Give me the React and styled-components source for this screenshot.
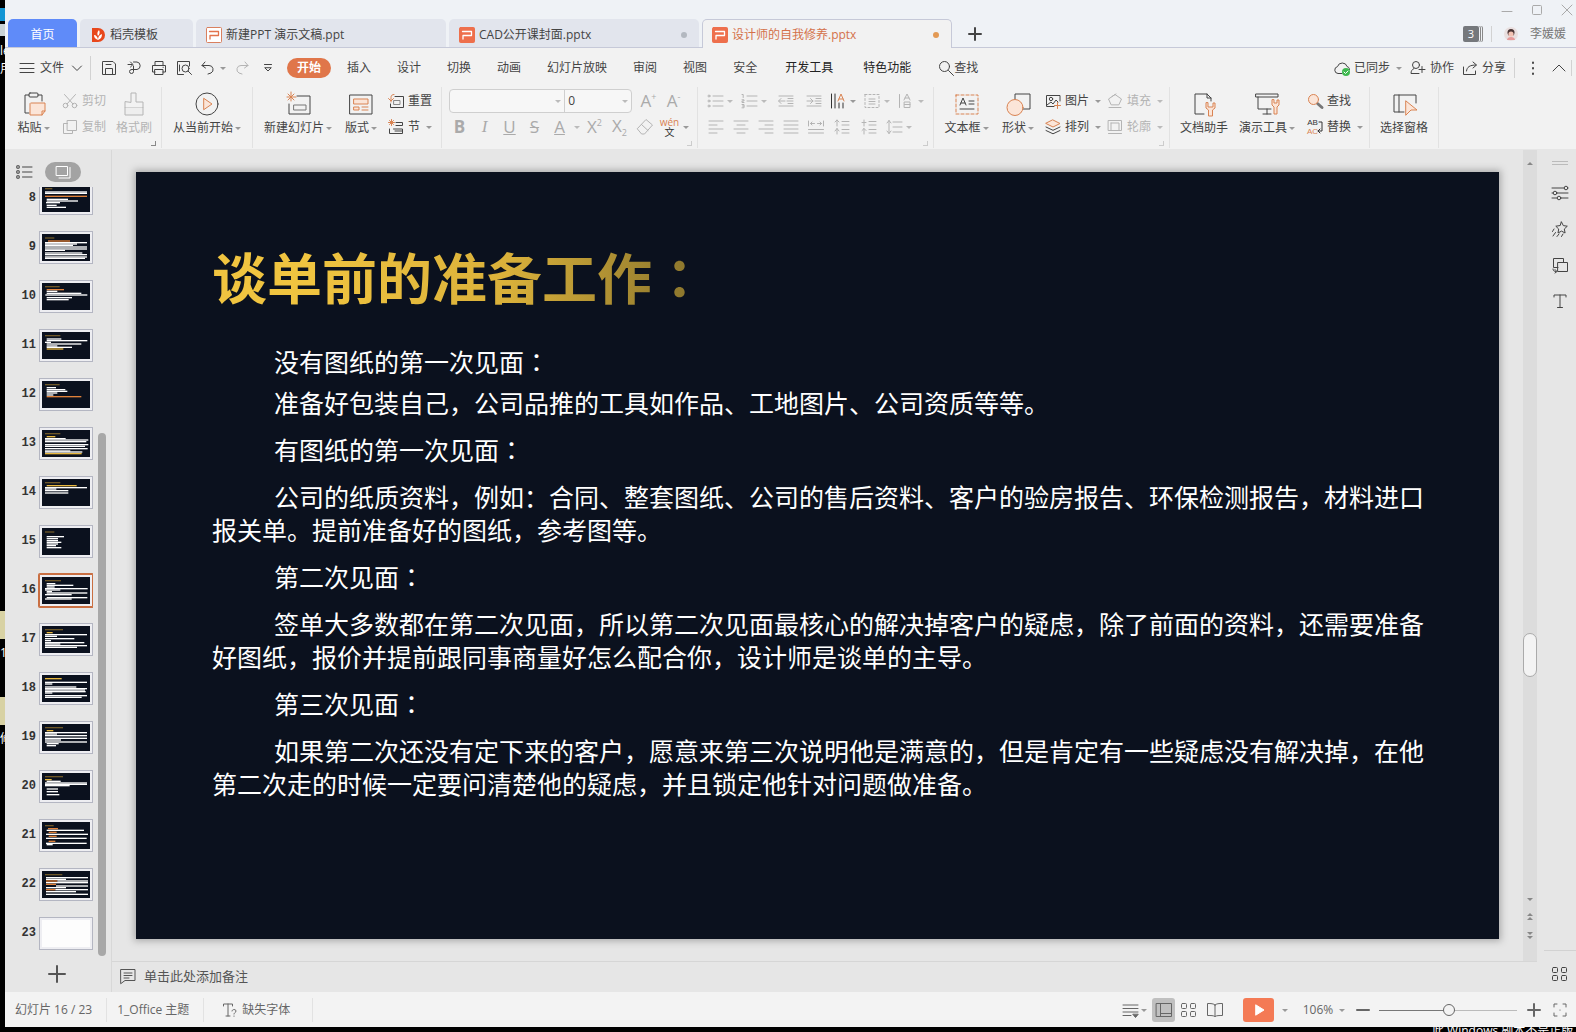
import React from "react";
import styled, { createGlobalStyle, css } from "styled-components";

const GlobalStyle = createGlobalStyle`
  * {
    box-sizing: border-box;
  }
  body {
    margin: 0;
    background: #000;
    overflow: hidden;
    font-family: "Open Sans", "Noto Sans CJK SC", sans-serif;
    font-size: 12px;
    line-height: 18px;
    color: #444;
  }
  button, select, input {
    font: inherit;
    color: inherit;
    margin: 0;
    padding: 0;
    border: none;
    background: none;
  }
  h1, p {
    margin: 0;
    font-weight: normal;
  }
`;

const O = "#d98352";
const P = "#fbe5d8";

/* ---------- icons ---------- */

const Svg = styled.svg`
  display: block;
  flex: none;
  fill: none;
  stroke: currentColor;
  stroke-width: ${(p) => p.$sw || 1};
  stroke-linejoin: round;
  stroke-linecap: round;
  overflow: visible;
`;

const Icon = ({ s = 16, sw, children }) => (
  <Svg width={s} height={s} viewBox={`0 0 ${s} ${s}`} $sw={sw} aria-hidden="true">
    {children}
  </Svg>
);

const icons = {
  menu: <path d="M1 3.500h14M1 8.500h14M1 12.500h14" />,
  chevron: <path d="M3.500 6 8 10.500 12.500 6" />,
  chevronUp: <path d="M2 11 8 5l6 6" />,
  save: <path d="M2 1.500h10l2.500 2.500v10.500h-13v-12zM4.500 14V8.500h7V14M5 4.500h5" />,
  exportPdf: <path d="M2 4.500h4M4.500 2 7 4.500 4.500 7M7.500 2h3.500a3.800 3.800 0 0 1 0 7.500H5.500M5.500 9.500a2 2 0 1 0 2 2V6" />,
  print: <path d="M4 5V1.500h8V5M4 12H1.500V5.500h13V12H12M4 9.500h8v5H4zM12 7.300h.3" />,
  preview: (
    <>
      <path d="M13.500 6V1.500h-12v13h6" />
      <circle cx="9.500" cy="8.500" r="3.500" />
      <path d="m12 11 3.500 3.500M3.500 11V5" />
    </>
  ),
  undo: <path d="M5 2 2 5.500 5.500 8M2 5.500h7a4 4 0 0 1 2 7.500l-3 1" />,
  redo: <path d="m11 2 3 3.500L10.500 8M14 5.500H7a4 4 0 0 0-2 7.500l3 1" />,
  more: <path d="M4.500 4.500h7M5 8l3 3 3-3z" />,
  search: (
    <>
      <circle cx="6.500" cy="6.500" r="5" />
      <path d="m10.500 10.500 5 5" />
    </>
  ),
  cloud: (
    <>
      <path d="M8 13.500H4a3.500 3.500 0 0 1-.5-6.900 5 5 0 0 1 9.600 0c1.500.3 2.400 1.500 2.400 3" />
      <circle cx="12" cy="12" r="4" fill="#3fb950" stroke="none" />
      <path d="m10 12 1.500 1.500 2.500-2.500" stroke="#fff" />
    </>
  ),
  collab: (
    <>
      <circle cx="6" cy="5" r="3.500" />
      <path d="M4 8.500c-2 1-3 2.500-3 5h8M9 9.500h6M12 6.500v6" />
    </>
  ),
  share: <path d="M1.500 7v7.500h12V11M4.500 11c.5-4 3-6 9.500-6M11 2l3.500 3L11 8" />,
  dots: <path d="M8 2.500v.5M8 8v.5M8 13.500v.5" strokeWidth="2" />,
  cut: (
    <>
      <circle cx="3.500" cy="12.500" r="2.300" />
      <circle cx="12.500" cy="12.500" r="2.300" />
      <path d="M2.500 1.500 11 11M13.500 1.500 5 11" />
    </>
  ),
  copy: <path d="M5.500 1.500h9v10h-9zM5.500 4.500h-4v10h9v-3" />,
  reset: (
    <>
      <path d="M7 3.500h8.500v11h-13V11" />
      <path d="M6 7.500h6v4H6z" stroke="#888" />
      <path d="M3 9V4.500C3 2.500 4 1.500 6 1.500M.5 5.500 3 8l2.500-2.500" stroke={O} />
    </>
  ),
  section: (
    <>
      <path d="M8 3.500h6.500v3H8M1.500 10v4.500h13v-4.500h-9M7 12h7" />
      <path d="M3.500.5v6M.5 3.500h6M1.500 1.500l4 4M5.500 1.500l-4 4" stroke={O} />
    </>
  ),
  picture: (
    <>
      <path d="M15 8V2.500H1.500v11H9" />
      <circle cx="6" cy="6" r="1.700" />
      <path d="m2 12 4-3 2 2 3-4 2 2" />
      <path d="M12.500 9.500v6M9.500 12.500h6" stroke={O} />
    </>
  ),
  arrange: (
    <>
      <path d="m1 8 7 3.300L15 8M1 11.500l7 3.300 7-3.300" />
      <path d="M8 1 15 4.500 8 8 1 4.500z" fill={P} stroke={O} />
    </>
  ),
  fill: <path d="M4 11.500 1.500 6 8 1.500 14.500 6 12 11.500zM5 3.500 9 1M2 14.500h12" />,
  outline: <path d="M1.500 1.500h13v10h-13zM4 4h8v7M4 11V4M1.500 14.500h13" />,
  find: (
    <>
      <path d="m10.500 10.500 4.500 4" strokeWidth="3" stroke="#777" />
      <circle cx="6.500" cy="6.500" r="5" fill={P} stroke={O} />
    </>
  ),
  bullets: (
    <>
      <path d="M6 3h10M6 8h10M6 13h10" />
      <circle cx="2" cy="3" r="1" />
      <circle cx="2" cy="8" r="1" />
      <circle cx="2" cy="13" r="1" />
    </>
  ),
  numbers: <path d="M6 3h10M6 8h10M6 13h10M1 1.500h1.200V4.500M1 6.800h2v1.200H1v1.500h2M1 11.500h2v3.300H1M1.500 13H3" />,
  outdent: <path d="M1 3h14M1 13h14M7 8H1M3 5.500.5 8 3 10.500M10 5.500h5M9 8h6M10 10.500h5" />,
  indent: <path d="M1 3h14M1 13h14M1 8h6M4.500 5.500 7 8l-2.500 2.500M10 5.500h5M9 8h6M10 10.500h5" />,
  textDir: (
    <>
      <path d="M1.500 1v14M5 1v14M9 10v5M13 10v5" stroke="#333" />
      <path d="m8 8 3-7 3 7M9 6h4" stroke={O} />
    </>
  ),
  valign: (
    <>
      <path d="M1 1.500h14v13H1z" strokeDasharray="2 2" />
      <path d="M5 6h6M5 8.500h6M5 11h6" />
    </>
  ),
  textBox: <path d="M1.500 1.500v13M6 7l3-6 3 6M7 5h4M6.500 9h5.500v5.500H6.500zM6.500 11.500H12" />,
  left: <path d="M1 2h14M1 6h8M1 10h14M1 14h8" />,
  center: <path d="M1 2h14M4 6h8M1 10h14M4 14h8" />,
  right: <path d="M1 2h14M7 6h8M1 10h14M7 14h8" />,
  justify: <path d="M1 2h14M1 6h14M1 10h14M1 14h14" />,
  distribute: <path d="M.5 2v5M15.500 2v5M2.500 4.500h4M9.500 4.500h4M4 3 2.500 4.500 4 6M12 3l1.500 1.500L12 6M.5 10.500h15M.5 14h15" />,
  spaceUp: <path d="M8 2.500h7M8 6h7M8 10.500h7M8 14h7M3 1v6M1 3l2-2 2 2M3 15V9.500M1 12l2-2.500L5 12" />,
  spaceDown: <path d="M8 2.500h7M8 6h7M8 10.500h7M8 14h7M3 1v6M1 3.500h4M3 15V9.500M1 11.500l2-2 2 2" />,
  lineHeight: <path d="M7 3h9M7 8h9M7 13h9M3 1.500v13M1 4l2-2.500L5 4M1 12l2 2.500L5 12" />,
  eraser: <path d="M.5 9.500 9 .5l6.500 5.500-8 9H5zM4.500 5.500l6.500 6" />,
  notes: <path d="M1 1.500h14v11H5l-4 3zM4 5h8M4 7.500h8M4 10h5" />,
  outlineView: <path d="M6.500 3H16M6.500 8H16M6.500 13H16M1.200 1.800h2v2.400h-2zM1.200 6.800h2v2.400h-2zM1.200 11.800h2v2.400h-2z" />,
  slideView: <path d="M1.500 2.500h11v9h-11zM15 3.500v10.500H4" />,
  missing: (
    <>
      <path d="M1.500 4V2h9v2M6 2v12M4 14h4" />
      <path d="M10 9c0-2 4-2 4 0 0 1.500-2 1.500-2 3M12 14v.3" />
    </>
  ),
  noteToggle: (
    <>
      <path d="M0 3h15M0 6.500h15M0 10h15M0 13.500h8" />
      <path d="m10 12.500 2.500 3 2.500-3z" fill="currentColor" />
    </>
  ),
  normalView: <path d="M.5 1.500h15v13H.5zM4.500 2v12M4.500 11.500H15" />,
  grid: (
    <>
      <rect x="0.5" y="1.500" width="5" height="5" rx="1" />
      <rect x="9.500" y="1.500" width="5" height="5" rx="1" />
      <rect x="0.5" y="9.500" width="5" height="5" rx="1" />
      <rect x="9.500" y="9.500" width="5" height="5" rx="1" />
    </>
  ),
  book: <path d="M8 3v11.500M8 3C6.500 1.500 4 1.500.5 1.500v12C4 13.500 6.500 13.500 8 14.500c1.500-1 4-1 7.500-1v-12C12 1.500 9.500 1.500 8 3z" />,
  minus: <path d="M2 8h12" strokeWidth="2" />,
  plus: <path d="M2 8h12M8 2v12" strokeWidth="2" />,
  thinPlus: <path d="M0 8h16M8 0v16" strokeWidth="2" />,
  fit: <path d="M2 5V2h3M11 2h3v3M14 11v3h-3M5 14H2v-3M8 8v.2" />,
  sliders: (
    <>
      <path d="M0 3h12M5 8h11M0 8h1M0 13h5M9 13h7" />
      <circle cx="14" cy="3" r="1.800" />
      <circle cx="3" cy="8" r="1.800" />
      <circle cx="7" cy="13" r="1.800" />
    </>
  ),
  star: <path d="m9.500 1 1.800 3.600 4 .6-3 2.800.8 4-3.600-1.900-3.500 1.900.7-4-2.900-2.800 4-.6zM2 8l-1.500 2.500M3.500 11.500 1 15M7 13l-2 2.500M11 13l-1.500 2.500" />,
  swap: <path d="M6 10.500H1.500v-9h10v4M6 5.500h9.500v9H6zM1 12c0 1.500 1 2.500 3 2.500M3 12.500l2 2-2 1.500" />,
  type: <path d="M2 4V2h12v2M8 2v12.500M5.500 14.500h5" />,
  winMin: <path d="M3 9.500h10" />,
  winMax: <rect x="3.500" y="3.500" width="9" height="9" rx="1" />,
  winClose: <path d="m3 3 10 10M13 3 3 13" />,
};

const bigIcons = {
  paste: (
    <>
      <path d="M7 3H3v18h4M16 3h4v6" />
      <rect x="7" y="1" width="9" height="4" rx="1" />
      <path d="M9 11h14v8l-3 4H8V12z" fill={P} stroke={O} />
      <path d="M23 19h-3v4" stroke={O} />
    </>
  ),
  brush: (
    <>
      <path d="M9 10V1h5v9h7v6H3v-6z" />
      <path d="M3 16v7h18v-7" fill="#eee" />
    </>
  ),
  play: (
    <>
      <circle cx="12" cy="12" r="11" />
      <path d="m9 6.500 8 5.500-8 5.500z" fill={P} stroke={O} />
    </>
  ),
  newSlide: (
    <>
      <path d="M11 4h13v18H3V12" />
      <path d="M8 13h12v5H8z" stroke="#777" />
      <path d="M5 0v9M1 5h9M2 2l6 6M8 2 2 8" stroke={O} />
    </>
  ),
  layout: (
    <>
      <path d="M1 3h22v19H1z" />
      <path d="M5 7h14v5H5zM5 15h5v3H5zM13 15h6M13 18h6" fill={P} stroke={O} />
    </>
  ),
  textFrame: (
    <>
      <path d="M1 3h22v19H1z" stroke={O} strokeDasharray="3 2" />
      <path d="m5 13 3-7 3 7M6 11h4M14 9h5M14 12h5M5 17h14" />
    </>
  ),
  shapes: (
    <>
      <path d="M9 10V2h15v15h-7" />
      <circle cx="9" cy="15.500" r="8" fill={P} stroke={O} />
    </>
  ),
  docHelp: (
    <>
      <path d="M12 22H3V2h12l4 4v3M15 2v4h4" />
      <path d="M14 11v5l2.500 2v6h4v-6l2.500-2v-5h-2v4h-5v-4z" fill={P} stroke={O} />
    </>
  ),
  present: (
    <>
      <path d="M1 2h22v3H1zM3 5v12h13M12 17v5M8 22h8" />
      <path d="M17 8v5l2 2v7h3v-7l2-2V8h-2v3h-3V8z" fill={P} stroke={O} />
    </>
  ),
  pane: (
    <>
      <path d="M12 20H2V3h22v8M7 3v17" />
      <path d="m14 9 11 9h-6l-5 5z" fill={P} stroke={O} />
    </>
  ),
};

/* ---------- shared bits ---------- */

const Caret = styled.span`
  flex: none;
  width: 6px;
  height: 3px;
  margin-left: 2px;
  border: 3px solid transparent;
  border-top-color: ${(p) => (p.$dim ? "#bbb" : "#999")};
  border-bottom: none;
`;

const PlainButton = styled.button`
  display: flex;
  flex: none;
  align-items: center;
  justify-content: center;
  white-space: nowrap;
  gap: ${(p) => p.$gap || 0}px;
  width: ${(p) => (p.$w ? p.$w + "px" : "auto")};
  height: ${(p) => p.$h || 20}px;
  color: ${(p) => (p.$dim ? "#b4b4b4" : p.$color || "inherit")};
`;

/* ---------- frame ---------- */

const Desktop = styled.div`
  position: relative;
  height: 100vh;
  padding: 0 0 5px 5px;
  overflow: hidden;
  color: #fff;
`;

const DesktopItem = styled.div`
  position: absolute;
  left: ${(p) => p.$left || 0};
  top: ${(p) => p.$top};
  white-space: nowrap;
  width: ${(p) => (p.$chip ? "5px" : "auto")};
  height: ${(p) => p.$chip || 18}px;
  background: ${(p) => p.$bg || "none"};
`;

const Window = styled.div`
  position: relative;
  display: flex;
  flex-direction: column;
  height: 100%;
  overflow: hidden;
  background: #f2f2f2;
  color: #444;
`;

const TitleBar = styled.header`
  display: flex;
  flex: none;
  align-items: flex-end;
  height: 48px;
  padding-left: 3px;
  background: #eff2f6;
  border-bottom: 1px solid #c6c9d8;
`;

const Tab = styled.button`
  display: flex;
  align-items: center;
  gap: 4px;
  flex: 0 1 ${(p) => p.$w}px;
  height: 28px;
  margin-right: 3px;
  padding: 3px 12px 0 10px;
  border-radius: 5px 5px 0 0;
  background: #e2e5ed;
  text-align: left;
  white-space: nowrap;
  ${(p) =>
    p.$home &&
    css`
      justify-content: center;
      padding: 3px 0 0;
      background: #5f8bf9;
      color: #fff;
    `}
  ${(p) =>
    p.$active &&
    css`
      height: 29px;
      margin-bottom: -1px;
      padding: 1px 12px 0 9px;
      background: #f2f2f2;
      border: 1px solid #c6c9d8;
      border-bottom: none;
      color: #d4714a;
    `}
`;

const Dot = styled.span`
  width: 6px;
  height: 6px;
  margin-left: auto;
  border-radius: 50%;
  background: ${(p) => p.$color};
`;

const TitleRight = styled.div`
  display: flex;
  flex-direction: column;
  align-items: flex-end;
  gap: 4px;
  height: 47px;
  margin-left: auto;
`;

const Controls = styled.div`
  display: flex;
  margin-right: -6px;
  color: #aaa;
`;

const User = styled.div`
  display: flex;
  align-items: center;
  padding-right: 10px;
  color: #777;
`;

const Count = styled.span`
  padding: 0 5px;
  height: 16px;
  border-radius: 2px;
  background: #75787c;
  color: #fff;
  font-size: 11px;
  line-height: 16px;
  box-shadow: 1px 0 #eff2f6, 2px 0 #888, 3px 0 #eff2f6, 4px 0 #888;
`;

const Rule = styled.span`
  flex: none;
  width: 1px;
  height: ${(p) => p.$h || 16}px;
  margin: 0 ${(p) => p.$m || 0}px;
  background: #d2d2d2;
`;

const MenuBar = styled.nav`
  display: flex;
  flex: none;
  align-items: center;
  height: 39px;
  padding: 1px 0 0 14px;
`;

const MenuTab = styled.button`
  flex: none;
  height: 20px;
  padding: 0 ${(p) => (p.$wide ? 15 : 13)}px;
  white-space: nowrap;
  color: ${(p) => (p.$wide ? "#222" : "inherit")};
`;

const ActiveMenuTab = styled.button`
  flex: none;
  width: 44px;
  height: 20px;
  margin: 0 3px 0 7px;
  border-radius: 10px;
  background: #e0764a;
  color: #fff;
  font-weight: bold;
`;

const MenuSearch = styled(PlainButton)`
  margin-left: 12px;
`;

const MenuRight = styled.div`
  display: flex;
  align-items: center;
  gap: 8px;
  margin-left: auto;
`;

const MenuEnd = styled.div`
  display: flex;
  align-items: center;
`;

const Ribbon = styled.div`
  display: flex;
  flex: none;
  height: 63px;
  border-bottom: 1px solid #e6e6e6;
`;

const Group = styled.div`
  position: relative;
  display: flex;
  flex: none;
  width: ${(p) => p.$w}px;
  height: 61px;
  border-right: 1px solid #e2e2e2;
`;

const Corner = styled.span`
  position: absolute;
  right: 5px;
  bottom: 2px;
  width: 5px;
  height: 5px;
  border-right: 1px solid ${(p) => (p.$dark ? "#888" : "#ccc")};
  border-bottom: 1px solid ${(p) => (p.$dark ? "#888" : "#ccc")};
`;

const BigButton = styled.button`
  display: flex;
  flex: none;
  flex-direction: column;
  align-items: center;
  gap: 3px;
  width: ${(p) => p.$w}px;
  padding-top: 5px;
  height: 56px;
  white-space: nowrap;
  color: ${(p) => (p.$dim ? "#b4b4b4" : "#444")};
`;

const BigLabel = styled.span`
  display: flex;
  align-items: center;
`;

const Stack = styled.div`
  display: flex;
  flex: none;
  flex-direction: column;
  align-items: flex-start;
  gap: 6px;
  padding: 4px 0 0 ${(p) => p.$left || 0}px;
  width: ${(p) => (p.$w ? p.$w + "px" : "auto")};
`;

const Row = styled.div`
  display: flex;
  align-items: center;
  height: 20px;
`;

const Glyph = styled.span`
  width: 20px;
  font-size: 17px;
  line-height: 20px;
  color: #aaa;
  font-style: ${(p) => (p.$italic ? "italic" : "normal")};
  font-weight: ${(p) => (p.$bold ? "bold" : "normal")};
  font-family: ${(p) => (p.$italic ? '"Liberation Serif", serif' : "inherit")};
  text-decoration: ${(p) => p.$line || "none"};
  text-decoration-thickness: 1px;
  sup, sub {
    font-size: 9px;
    line-height: 1;
  }
`;

const Pinyin = styled.span`
  display: flex;
  flex-direction: column;
  align-items: center;
  font-size: 10px;
  line-height: 10px;
  color: #333;
  span {
    color: #d98352;
  }
`;

const Replace = styled.span`
  display: flex;
  align-items: center;
  width: 16px;
  color: #333;
`;

const ReplaceText = styled.span`
  display: flex;
  flex-direction: column;
  width: 11px;
  font: 8px/9px "Liberation Sans", sans-serif;
  span {
    color: #d98352;
  }
`;

const Combo = styled.div`
  display: flex;
  width: 183px;
  height: 24px;
  margin: 0 4px 0 2px;
  border: 1px solid #cfcfcf;
  border-radius: 4px;
  background: #f7f7f7;
`;

const ComboPart = styled.label`
  display: flex;
  align-items: center;
  width: ${(p) => p.$w}px;
  padding: 0 3px;
  & + & {
    border-left: 1px solid #cfcfcf;
  }
  select {
    flex: 1;
    min-width: 0;
    appearance: none;
    outline: none;
  }
`;

/* ---------- workspace ---------- */

const Workspace = styled.div`
  display: flex;
  flex: 1;
  min-height: 0;
  background: #e6e6e6;
`;

const Sidebar = styled.aside`
  display: flex;
  flex: none;
  flex-direction: column;
  width: 107px;
  border-right: 1px solid #d8d8d8;
`;

const SideHead = styled.div`
  display: flex;
  flex: none;
  align-items: center;
  gap: 13px;
  height: 37px;
  padding: 6px 0 0 11px;
`;

const Pill = styled.button`
  display: flex;
  align-items: center;
  justify-content: center;
  width: 36px;
  height: 20px;
  border-radius: 10px;
  background: #a3a3a3;
  color: #fff;
`;

const SideBody = styled.div`
  display: flex;
  flex: 1;
  min-height: 0;
  justify-content: space-between;
  padding-right: 5px;
`;

const ThumbList = styled.div`
  display: flex;
  flex-direction: column;
  justify-content: flex-end;
  gap: 16px;
  padding-bottom: 7px;
  overflow: hidden;
`;

const ThumbRow = styled.button`
  display: flex;
  flex: none;
  align-items: center;
  gap: 3px;
  height: 33px;
`;

const Num = styled.span`
  width: 31px;
  padding-bottom: 2px;
  text-align: right;
  color: #333;
  font: bold 12px/18px "Liberation Mono", monospace;
`;

const ThumbFrame = styled.span`
  display: block;
  padding: 2px;
  border: 1px solid #b4b6c2;
  background: #eeeef2;
  ${(p) =>
    p.$active &&
    css`
      border-color: #c96f42;
      border-radius: 1px;
      box-shadow: 0 0 0 1px #c96f42;
    `}
`;

const Mini = styled.svg`
  display: block;
  width: 48px;
  height: 27px;
  background: ${(p) => (p.$blank ? "#fdfdfd" : "#0b111e")};
`;

const SideScroll = styled.div`
  display: flex;
  align-items: flex-end;
  width: 8px;
  padding-bottom: 1px;
`;

const SideScrollThumb = styled.div`
  width: 8px;
  height: 68%;
  border-radius: 4px;
  background: #a8a8a8;
`;

const AddSlide = styled.button`
  display: flex;
  flex: none;
  justify-content: center;
  align-items: center;
  height: 35px;
  padding: 0 3px 2px 0;
  color: #555;
`;

const Center = styled.main`
  display: flex;
  flex: 1;
  flex-direction: column;
  min-width: 0;
`;

const CanvasRow = styled.div`
  display: flex;
  flex: 1;
  min-height: 0;
`;

const Canvas = styled.div`
  display: flex;
  flex: 1;
  padding: 22px 24px;
`;

const Slide = styled.article`
  flex: 1;
  padding: 73px 68px 0 76px;
  background: #0b111e;
  box-shadow: 0 0 7px 2px #aaa;
  color: #fff;
  font-family: "Noto Sans CJK SC", sans-serif;
`;

const SlideTitle = styled.h1`
  width: 495px;
  margin-bottom: 40px;
  font-size: 55px;
  font-weight: 700;
  line-height: 60px;
  white-space: nowrap;
  color: transparent;
  background: linear-gradient(90deg, #f0c440 20%, #d9b03a 60%, #85712c);
  background-clip: text;
`;

const Para = styled.p`
  margin-bottom: ${(p) => (p.$tight ? 8 : 14)}px;
  font-size: 25px;
  line-height: 33px;
  text-indent: 62px;
`;

// a closing colon sits in the middle of its cell
const Colon = styled.span`
  font-family: "Noto Sans CJK JP", sans-serif;
`;

const VScroll = styled.div`
  display: flex;
  flex-direction: column;
  align-items: center;
  width: 14px;
  padding: 12px 0 22px;
  background: #dcdcdc;
`;

const Space = styled.div`
  flex: ${(p) => p.$n};
`;

const VThumb = styled.div`
  width: 14px;
  height: 44px;
  border: 1px solid #aaa;
  border-radius: 7px;
  background: #f3f3f3;
`;

const Arrow = styled.span`
  width: 6px;
  height: 3px;
  margin-bottom: ${(p) => p.$mb || 0}px;
  border: 3px solid transparent;
  ${(p) =>
    p.$up
      ? "border-bottom-color: #888; border-top: none;"
      : "border-top-color: #888; border-bottom: none;"}
`;

const Notes = styled.button`
  display: flex;
  flex: none;
  align-items: center;
  gap: 8px;
  height: 31px;
  padding: 0 0 2px 8px;
  border-top: 1px solid #d6d6d6;
  font-size: 13px;
  color: #555;
`;

const Tools = styled.aside`
  display: flex;
  flex: none;
  flex-direction: column;
  align-items: center;
  gap: 20px;
  width: 39px;
  padding: 11px 0 0 7px;
  color: #444;
`;

const Grip = styled.span`
  width: 16px;
  height: 4px;
  border: solid #bbb;
  border-width: 1px 0;
`;

const ToolsEnd = styled.div`
  display: flex;
  justify-content: center;
  width: 100%;
  height: 42px;
  margin-top: auto;
  padding-top: 15px;
  border-top: 1px solid #d2d2d2;
`;

const StatusBar = styled.footer`
  display: flex;
  flex: none;
  align-items: center;
  height: 35px;
  padding-top: 1px;
  background: #f3f3f3;
  color: #666;
`;

const StatusCell = styled.div`
  display: flex;
  align-items: center;
  gap: 4px;
  height: 24px;
  padding: 0 ${(p) => p.$p + 4}px 0 ${(p) => p.$p}px;
  border-right: 1px solid #e2e2e2;
  white-space: nowrap;
`;

const StatusRight = styled.div`
  display: flex;
  align-items: center;
  margin-left: auto;
`;

const ViewButton = styled(PlainButton)`
  border-radius: 3px;
  background: ${(p) => (p.$on ? "#c0c0c0" : "none")};
`;

const PlayButton = styled(PlainButton)`
  margin-left: 16px;
  border-radius: 3px;
  background: #f47a55;
  color: #fff;
`;

const Zoom = styled.input`
  appearance: none;
  width: 138px;
  height: 12px;
  margin: 0 7px;
  background: linear-gradient(90deg, #777 50%, #bbb 50%) center / 100% 1px no-repeat;
  &::-webkit-slider-thumb {
    appearance: none;
    width: 12px;
    height: 12px;
    border: 1px solid #666;
    border-radius: 50%;
    background: #f3f3f3;
  }
`;

/* ---------- data ---------- */

const colors = { w: "#fff", o: "#e0813a", y: "#e8b840", g: "#6e5728" };

// every line is [colour, x, y, length] on a 144 x 81 slide
const thumbs = [
  { n: 8, lines: [["g", 9, 9, 22], ["w", 9, 19, 126], ["w", 9, 23, 126], ["o", 9, 32, 126], ["w", 14, 41, 64], ["w", 14, 46, 94], ["w", 12, 51, 42], ["w", 14, 59, 30], ["w", 14, 65, 58]] },
  { n: 9, lines: [["g", 9, 10, 28], ["o", 18, 19, 66], ["w", 9, 24, 126], ["w", 9, 28, 96], ["w", 9, 32, 84], ["w", 9, 37, 126], ["w", 9, 43, 126], ["w", 9, 47, 60], ["w", 9, 55, 112], ["w", 9, 60, 126], ["w", 9, 67, 126], ["w", 9, 71, 120]] },
  { n: 10, lines: [["g", 9, 9, 44], ["o", 14, 18, 52], ["w", 14, 23, 32], ["w", 14, 29, 104], ["w", 10, 34, 126], ["w", 14, 42, 76], ["w", 14, 48, 66]] },
  { n: 11, lines: [["g", 9, 9, 46], ["w", 14, 19, 44], ["w", 14, 24, 122], ["w", 9, 29, 18], ["w", 14, 34, 104], ["w", 14, 40, 32], ["w", 14, 44, 76], ["y", 14, 49, 50]] },
  { n: 12, lines: [["g", 9, 9, 44], ["w", 14, 18, 28], ["w", 14, 24, 56], ["w", 14, 29, 62], ["w", 14, 34, 32], ["w", 14, 40, 20], ["o", 14, 45, 104]] },
  { n: 13, lines: [["g", 9, 9, 46], ["y", 14, 18, 26], ["w", 9, 24, 62], ["w", 9, 28, 130], ["w", 9, 33, 124], ["w", 9, 42, 130], ["w", 9, 47, 120], ["w", 9, 54, 128], ["w", 9, 61, 76], ["w", 9, 64, 112], ["y", 9, 69, 110]] },
  { n: 14, lines: [["g", 9, 9, 46], ["y", 14, 18, 90], ["w", 9, 24, 126], ["w", 9, 28, 34], ["w", 9, 33, 70], ["w", 9, 40, 70]] },
  { n: 15, lines: [["g", 9, 10, 28], ["w", 14, 24, 52], ["w", 14, 30, 34], ["w", 14, 36, 34], ["w", 14, 41, 44], ["w", 14, 46, 34], ["w", 14, 51, 28], ["w", 14, 57, 44]] },
  { n: 16, active: true, lines: [["g", 9, 9, 48], ["w", 14, 18, 26], ["w", 14, 23, 80], ["w", 14, 28, 24], ["w", 9, 33, 128], ["w", 9, 37, 46], ["w", 14, 42, 16], ["w", 14, 46, 122], ["w", 9, 51, 80], ["w", 14, 60, 122], ["w", 9, 64, 80]] },
  { n: 17, lines: [["g", 9, 9, 54], ["y", 14, 18, 18], ["w", 9, 24, 126], ["w", 9, 29, 36], ["w", 9, 36, 88], ["w", 9, 42, 18], ["w", 9, 48, 118], ["w", 9, 52, 46], ["w", 9, 57, 126], ["w", 9, 62, 96]] },
  { n: 18, lines: [["y", 9, 9, 50], ["w", 9, 20, 126], ["w", 9, 25, 22], ["w", 9, 34, 94], ["w", 9, 39, 126], ["w", 9, 43, 120], ["w", 9, 48, 122], ["w", 9, 52, 22], ["w", 9, 60, 126], ["w", 9, 65, 110]] },
  { n: 19, lines: [["g", 9, 9, 54], ["y", 14, 18, 20], ["w", 9, 24, 126], ["w", 9, 28, 36], ["w", 9, 33, 126], ["w", 9, 41, 126], ["w", 9, 46, 48], ["w", 9, 52, 126], ["w", 14, 57, 36], ["w", 14, 63, 28]] },
  { n: 20, lines: [["g", 9, 9, 54], ["y", 9, 18, 20], ["w", 14, 23, 42], ["w", 9, 28, 126], ["w", 9, 32, 126], ["w", 9, 36, 74], ["w", 14, 46, 34], ["w", 14, 54, 34], ["w", 14, 63, 38]] },
  { n: 21, lines: [["g", 9, 9, 26], ["o", 18, 18, 30], ["w", 14, 23, 112], ["o", 20, 29, 24], ["w", 12, 35, 126], ["o", 20, 41, 24], ["w", 12, 47, 122], ["o", 20, 56, 20], ["w", 12, 62, 122], ["w", 14, 66, 18]] },
  { n: 22, lines: [["g", 9, 9, 52], ["w", 12, 18, 126], ["w", 12, 23, 60], ["o", 12, 28, 34], ["w", 46, 28, 92], ["w", 12, 33, 126], ["o", 12, 38, 30], ["w", 42, 43, 96], ["w", 12, 48, 60], ["o", 12, 54, 28], ["w", 40, 54, 98], ["w", 12, 60, 90], ["w", 12, 68, 126]] },
  { n: 23, blank: true, lines: [] },
];

const paragraphs = [
  { tight: true, text: "没有图纸的第一次见面：" },
  { text: "准备好包装自己，公司品推的工具如作品、工地图片、公司资质等等。" },
  { text: "有图纸的第一次见面：" },
  { text: "公司的纸质资料，例如：合同、整套图纸、公司的售后资料、客户的验房报告、环保检测报告，材料进口报关单。提前准备好的图纸，参考图等。" },
  { text: "第二次见面：" },
  { text: "签单大多数都在第二次见面，所以第二次见面最核心的解决掉客户的疑虑，除了前面的资料，还需要准备好图纸，报价并提前跟同事商量好怎么配合你，设计师是谈单的主导。" },
  { text: "第三次见面：" },
  { text: "如果第二次还没有定下来的客户，愿意来第三次说明他是满意的，但是肯定有一些疑虑没有解决掉，在他第二次走的时候一定要问清楚他的疑虑，并且锁定他针对问题做准备。" },
];

/* ---------- parts ---------- */

const withColon = (text) =>
  text.endsWith("：") ? (
    <>
      {text.slice(0, -1)}
      <Colon>：</Colon>
    </>
  ) : (
    text
  );

const PptLogo = ({ hollow }) => (
  <Svg width="16" height="16" viewBox="0 0 16 16" aria-hidden="true">
    <rect x="0.5" y="0.5" width="15" height="15" rx="1" fill={hollow ? "#fff" : "#ee6f4c"} stroke={hollow ? "#d9805f" : "#ee6f4c"} />
    <path d="M3.500 4.500h9v4H4v3.500" stroke={hollow ? "#e2734c" : "#fff"} strokeWidth="1.300" />
  </Svg>
);

const Big = ({ icon, label, w, caret, dim }) => (
  <BigButton $w={w} $dim={dim}>
    <Icon s={24}>{bigIcons[icon]}</Icon>
    <BigLabel>
      {label}
      {caret && <Caret />}
    </BigLabel>
  </BigButton>
);

const Small = ({ icon, label, caret, dim, children }) => (
  <PlainButton $gap={4} $dim={dim}>
    {children || <Icon>{icons[icon]}</Icon>}
    {label}
    {caret && <Caret $dim={dim} />}
  </PlainButton>
);

const Tool = ({ icon, w = 25, caret, dim = true, title, children }) => (
  <PlainButton $w={w} $gap={2} $dim={dim} aria-label={title || icon}>
    {children || <Icon>{icons[icon]}</Icon>}
    {caret && <Caret $dim={dim} />}
  </PlainButton>
);

const Header = () => (
  <TitleBar>
    <Tab $home $w={69}>首页</Tab>
    <Tab $w={113}>
      <Svg width="16" height="16" viewBox="0 0 16 16" aria-hidden="true">
        <path d="M2 1h6a7 7 0 0 1 0 14H2z" fill="#e8481c" stroke="none" />
        <path d="M8 13c-3-1-4-3-4-5 2 0 4 2 4 5zM8 13c0-3 1-5 4-6 0 3-1 5-4 6zM8 9c-1-2-1-4 1-6 1 2 1 4-1 6z" fill="#fff" stroke="none" />
      </Svg>
      稻壳模板
    </Tab>
    <Tab $w={250}>
      <PptLogo hollow />
      新建PPT 演示文稿.ppt
    </Tab>
    <Tab $w={250}>
      <PptLogo />
      CAD公开课封面.pptx
      <Dot $color="#b3b8c0" />
    </Tab>
    <Tab $w={250} $active>
      <PptLogo />
      设计师的自我修养.pptx
      <Dot $color="#e39a55" />
    </Tab>
    <PlainButton $w={40} $h={26} aria-label="新建">
      <Icon s={16}>{icons.plus}</Icon>
    </PlainButton>
    <TitleRight>
      <Controls>
        <PlainButton $w={30} aria-label="最小化"><Icon>{icons.winMin}</Icon></PlainButton>
        <PlainButton $w={30} aria-label="最大化"><Icon>{icons.winMax}</Icon></PlainButton>
        <PlainButton $w={30} aria-label="关闭"><Icon>{icons.winClose}</Icon></PlainButton>
      </Controls>
      <User>
        <Count>3</Count>
        <Rule $m={12} />
        <PlainButton $gap={12}>
          <Svg width="14" height="14" viewBox="0 0 14 14" aria-hidden="true">
            <circle cx="7" cy="7" r="7" fill="#e9dfdf" stroke="none" />
            <circle cx="7" cy="5.500" r="3.500" fill="#4a3434" stroke="none" />
            <circle cx="7" cy="7" r="2.600" fill="#f3c3b4" stroke="none" />
            <path d="M3 13c0-4 8-4 8 0z" fill="#e69a9a" stroke="none" />
          </Svg>
          李媛媛
        </PlainButton>
      </User>
    </TitleRight>
  </TitleBar>
);

const Menu = () => (
  <MenuBar>
    <PlainButton $gap={5}>
      <Icon>{icons.menu}</Icon>
      文件
      <Icon>{icons.chevron}</Icon>
    </PlainButton>
    <Rule $h={24} $m={5} />
    <Tool icon="save" dim={false} />
    <Tool icon="exportPdf" dim={false} />
    <Tool icon="print" dim={false} />
    <Tool icon="preview" dim={false} />
    <Tool icon="undo" dim={false} caret w={33} />
    <Tool icon="redo" w={26} />
    <Tool icon="more" dim={false} />
    <ActiveMenuTab>开始</ActiveMenuTab>
    {["插入", "设计", "切换", "动画", "幻灯片放映", "审阅", "视图", "安全"].map((t) => (
      <MenuTab key={t}>{t}</MenuTab>
    ))}
    <MenuTab $wide>开发工具</MenuTab>
    <MenuTab $wide>特色功能</MenuTab>
    <MenuSearch><Icon>{icons.search}</Icon>查找</MenuSearch>
    <MenuRight>
      <PlainButton $gap={4}>
        <Icon>{icons.cloud}</Icon>已同步<Caret />
      </PlainButton>
      <PlainButton $gap={4}><Icon>{icons.collab}</Icon>协作</PlainButton>
      <PlainButton $gap={4}><Icon>{icons.share}</Icon>分享</PlainButton>
      <MenuEnd>
        <Rule $h={20} />
        <PlainButton $w={36} aria-label="更多"><Icon>{icons.dots}</Icon></PlainButton>
        <PlainButton $w={16} aria-label="收起"><Icon>{icons.chevronUp}</Icon></PlainButton>
        <Rule $h={0} $m={4} />
      </MenuEnd>
    </MenuRight>
  </MenuBar>
);

const RibbonBar = () => (
  <Ribbon>
    <Group $w={157}>
      <Big icon="paste" label="粘贴" caret w={57} />
      <Stack $w={47}>
        <Small icon="cut" label="剪切" dim />
        <Small icon="copy" label="复制" dim />
      </Stack>
      <Big icon="brush" label="格式刷" w={50} dim />
      <Corner $dark />
    </Group>
    <Group $w={91}>
      <Big icon="play" label="从当前开始" caret w={90} />
    </Group>
    <Group $w={189}>
      <Big icon="newSlide" label="新建幻灯片" caret w={90} />
      <Big icon="layout" label="版式" caret w={36} />
      <Stack $left={9}>
        <Small icon="reset" label="重置" />
        <Small icon="section" label="节" caret />
      </Stack>
    </Group>
    <Group $w={256}>
      <Stack $left={5}>
        <Row>
          <Combo>
            <ComboPart $w={115}>
              <select aria-label="字体"><option></option></select>
              <Caret $dim />
            </ComboPart>
            <ComboPart $w={67}>
              <select aria-label="字号"><option>0</option></select>
              <Caret $dim />
            </ComboPart>
          </Combo>
          <Tool title="增大字号"><Glyph>A<sup>+</sup></Glyph></Tool>
          <Tool title="减小字号"><Glyph>A<sup>-</sup></Glyph></Tool>
        </Row>
        <Row>
          <Tool title="加粗"><Glyph $bold>B</Glyph></Tool>
          <Tool title="倾斜"><Glyph $italic>I</Glyph></Tool>
          <Tool title="下划线"><Glyph $line="underline">U</Glyph></Tool>
          <Tool title="删除线"><Glyph $line="line-through">S</Glyph></Tool>
          <Tool title="字体颜色" caret w={35}><Glyph $line="underline">A</Glyph></Tool>
          <Tool title="上标"><Glyph>X<sup>2</sup></Glyph></Tool>
          <Tool title="下标"><Glyph>X<sub>2</sub></Glyph></Tool>
          <Tool icon="eraser" />
          <Tool title="拼音" caret dim={false} w={35}>
            <Pinyin><span>wén</span>文</Pinyin>
          </Tool>
        </Row>
      </Stack>
      <Corner />
    </Group>
    <Group $w={236}>
      <Stack $left={5}>
        <Row>
          <Tool icon="bullets" caret w={33} />
          <Tool icon="numbers" caret w={35} />
          <Tool icon="outdent" w={30} />
          <Tool icon="indent" />
          <Tool icon="textDir" caret dim={false} w={33} />
          <Tool icon="valign" caret w={35} />
          <Tool icon="textBox" caret w={33} />
        </Row>
        <Row>
          <Tool icon="left" />
          <Tool icon="center" />
          <Tool icon="right" />
          <Tool icon="justify" />
          <Tool icon="distribute" />
          <Tool icon="spaceUp" w={28} />
          <Tool icon="spaceDown" />
          <Tool icon="lineHeight" caret w={35} />
        </Row>
      </Stack>
      <Corner />
    </Group>
    <Group $w={236}>
      <Big icon="textFrame" label="文本框" caret w={65} />
      <Big icon="shapes" label="形状" caret w={38} />
      <Stack $left={8} $w={70}>
        <Small icon="picture" label="图片" caret />
        <Small icon="arrange" label="排列" caret />
      </Stack>
      <Stack>
        <Small icon="fill" label="填充" caret dim />
        <Small icon="outline" label="轮廓" caret dim />
      </Stack>
      <Corner />
    </Group>
    <Group $w={200}>
      <Big icon="docHelp" label="文档助手" w={68} />
      <Big icon="present" label="演示工具" caret w={58} />
      <Stack $left={11}>
        <Small icon="find" label="查找" />
        <Small label="替换" caret>
          <Replace>
            <ReplaceText>AB<span>AC</span></ReplaceText>
            <Svg width="5" height="16" viewBox="0 0 5 16" aria-hidden="true">
              <path d="M1 3h3v9H0M2 10l-2 2 2 2" />
            </Svg>
          </Replace>
        </Small>
      </Stack>
    </Group>
    <Group $w={69}>
      <Big icon="pane" label="选择窗格" w={68} />
    </Group>
  </Ribbon>
);

const Thumb = ({ n, lines, active, blank }) => (
  <ThumbRow>
    <Num>{n}</Num>
    <ThumbFrame $active={active}>
      <Mini viewBox="0 0 144 81" $blank={blank}>
        {lines.map(([c, x, y, w], i) => (
          <rect key={i} x={x} y={y} width={w} height="4" fill={colors[c]} />
        ))}
      </Mini>
    </ThumbFrame>
  </ThumbRow>
);

const Status = () => (
  <StatusBar>
    <StatusCell $p={10}>幻灯片 16 / 23</StatusCell>
    <StatusCell $p={10}>1_Office 主题</StatusCell>
    <StatusCell $p={18}>
      <Icon>{icons.missing}</Icon>缺失字体
    </StatusCell>
    <StatusRight>
      <ViewButton $w={34} aria-label="备注"><Icon>{icons.noteToggle}</Icon><Caret /></ViewButton>
      <ViewButton $w={23} $h={24} $on aria-label="普通视图"><Icon>{icons.normalView}</Icon></ViewButton>
      <ViewButton $w={28} aria-label="幻灯片浏览"><Icon>{icons.grid}</Icon></ViewButton>
      <ViewButton $w={24} aria-label="阅读视图"><Icon>{icons.book}</Icon></ViewButton>
      <PlayButton $w={31} $h={24} aria-label="放映">
        <Icon><path d="m5 3 8 5-8 5z" fill="#fff" /></Icon>
      </PlayButton>
      <PlainButton $w={20} aria-label="放映选项"><Caret /></PlainButton>
      <PlainButton $w={60} $gap={4}>106%<Caret /></PlainButton>
      <PlainButton $w={18} aria-label="缩小"><Icon>{icons.minus}</Icon></PlainButton>
      <Zoom type="range" min="0" max="100" defaultValue="51" aria-label="缩放" />
      <PlainButton $w={20} aria-label="放大"><Icon>{icons.plus}</Icon></PlainButton>
      <PlainButton $w={32} aria-label="适应窗口"><Icon>{icons.fit}</Icon></PlainButton>
    </StatusRight>
  </StatusBar>
);

const App = () => (
  <Desktop>
    <GlobalStyle />
    <DesktopItem $top="8px" $chip={13} $bg="#1496d4" />
    <DesktopItem $top="24px" $chip={12} $bg="#c9d3d6" />
    <DesktopItem $top="42px">le</DesktopItem>
    <DesktopItem $top="60px">用</DesktopItem>
    <DesktopItem $top="611px" $chip={28} $bg="#d8d2a4" />
    <DesktopItem $top="644px">12</DesktopItem>
    <DesktopItem $top="697px" $chip={28} $bg="#d8d2a4" />
    <DesktopItem $top="730px">修</DesktopItem>
    <DesktopItem $top="calc(100% - 10px)" $left="calc(100% - 144px)">
      此 Windows 副本不是正版
    </DesktopItem>
    <Window>
      <Header />
      <Menu />
      <RibbonBar />
      <Workspace>
        <Sidebar>
          <SideHead>
            <PlainButton aria-label="大纲"><Icon>{icons.outlineView}</Icon></PlainButton>
            <Pill aria-label="幻灯片"><Icon>{icons.slideView}</Icon></Pill>
          </SideHead>
          <SideBody>
            <ThumbList>
              {thumbs.map((t) => (
                <Thumb key={t.n} {...t} />
              ))}
            </ThumbList>
            <SideScroll>
              <SideScrollThumb />
            </SideScroll>
          </SideBody>
          <AddSlide aria-label="新建幻灯片"><Icon>{icons.thinPlus}</Icon></AddSlide>
        </Sidebar>
        <Center>
          <CanvasRow>
            <Canvas>
              <Slide>
                <SlideTitle>{withColon("谈单前的准备工作：")}</SlideTitle>
                {paragraphs.map((p) => (
                  <Para key={p.text} $tight={p.tight}>
                    {withColon(p.text)}
                  </Para>
                ))}
              </Slide>
            </Canvas>
            <VScroll>
              <Arrow $up />
              <Space $n={465} />
              <VThumb />
              <Space $n={220} />
              <Arrow $mb={12} />
              <Arrow $up $mb={1} />
              <Arrow $up $mb={12} />
              <Arrow $mb={1} />
              <Arrow />
            </VScroll>
          </CanvasRow>
          <Notes>
            <Icon>{icons.notes}</Icon>
            单击此处添加备注
          </Notes>
        </Center>
        <Tools>
          <Grip />
          <PlainButton $h={16} aria-label="属性"><Icon>{icons.sliders}</Icon></PlainButton>
          <PlainButton $h={16} aria-label="动画"><Icon>{icons.star}</Icon></PlainButton>
          <PlainButton $h={16} aria-label="切换"><Icon>{icons.swap}</Icon></PlainButton>
          <PlainButton $h={16} aria-label="文字"><Icon>{icons.type}</Icon></PlainButton>
          <ToolsEnd>
            <PlainButton $h={16} aria-label="应用"><Icon>{icons.grid}</Icon></PlainButton>
          </ToolsEnd>
        </Tools>
      </Workspace>
      <Status />
    </Window>
  </Desktop>
);

export default App;
